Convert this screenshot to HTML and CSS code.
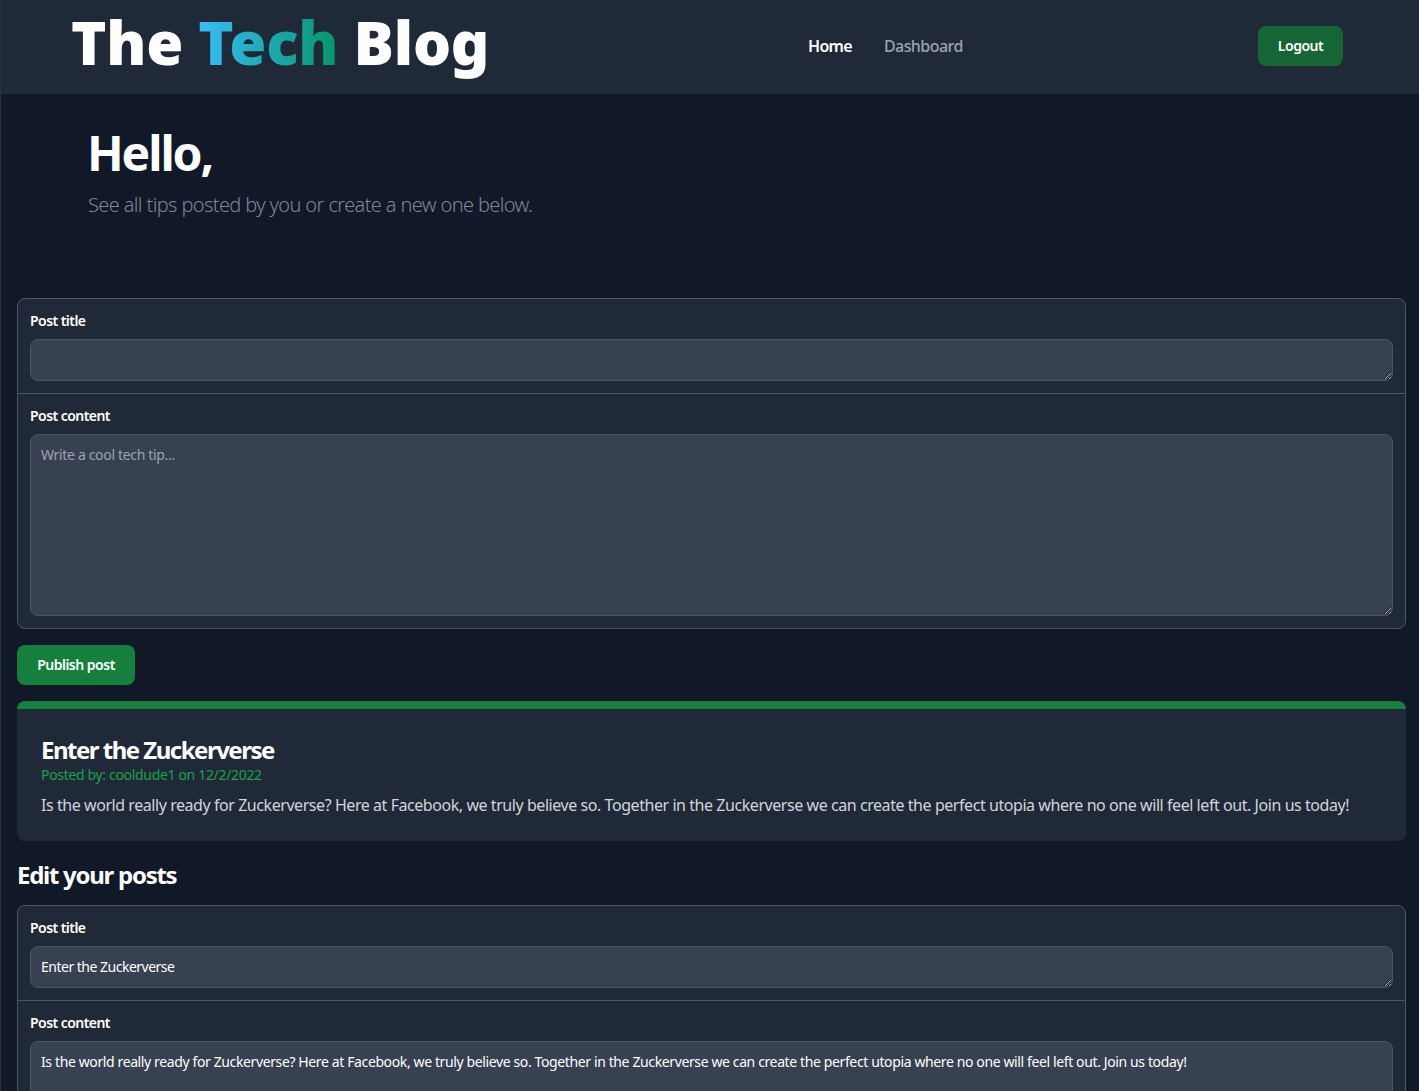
FILE: index.html
```html
<!DOCTYPE html>
<html lang="en">
<head>
<meta charset="utf-8">
<title>The Tech Blog</title>
<link rel="stylesheet" href="styles.css">
</head>
<body>
<nav class="nav">
  <a class="logo">The <span class="logo-grad">Tech</span> Blog</a>
  <div class="nav-links"><a class="nav-link active">Home</a><a class="nav-link nav-link-muted">Dashboard</a></div>
  <button class="btn btn-logout">Logout</button>
</nav>
<header class="hero">
  <h1 class="hero-title">Hello,</h1>
  <p class="hero-sub">See all tips posted by you or create a new one below.</p>
</header>
<main class="main">
  <form class="form-card">
    <div class="field">
      <label class="label">Post title</label>
      <textarea class="input" rows="1"></textarea>
    </div>
    <div class="field field-divided">
      <label class="label">Post content</label>
      <textarea class="input input-tall" placeholder="Write a cool tech tip..."></textarea>
    </div>
  </form>
  <button class="btn btn-publish">Publish post</button>
  <article class="post">
    <h2 class="post-title">Enter the Zuckerverse</h2>
    <p class="post-meta">Posted by: cooldude1 on 12/2/2022</p>
    <p class="post-body">Is the world really ready for Zuckerverse? Here at Facebook, we truly believe so. Together in the Zuckerverse we can create the perfect utopia where no one will feel left out. Join us today!</p>
  </article>
  <h2 class="section-title">Edit your posts</h2>
  <form class="form-card">
    <div class="field">
      <label class="label">Post title</label>
      <textarea class="input" rows="1">Enter the Zuckerverse</textarea>
    </div>
    <div class="field field-divided">
      <label class="label">Post content</label>
      <textarea class="input input-tall">Is the world really ready for Zuckerverse? Here at Facebook, we truly believe so. Together in the Zuckerverse we can create the perfect utopia where no one will feel left out. Join us today!</textarea>
    </div>
  </form>
</main>
</body>
</html>
```
FILE: styles.css
```css
* { box-sizing: border-box; }
html { overflow: hidden; height: 100%; }
body {
  margin: 0;
  height: 1091px;
  overflow: hidden;
  background: #111827;
  color: #fff;
  font-family: "Noto Sans", "Open Sans", sans-serif;
  border-left: 1px solid #2a303c;
}
.nav {
  height: 94px;
  background: #1f2937;
  display: flex;
  align-items: center;
  padding: 0 76px 2px 70px;
}
.logo {
  font-size: 60px;
  font-weight: 900;
  line-height: 60px;
  width: 737px;
  letter-spacing: -0.25px;
  margin-top: -9px;
  white-space: nowrap;
}
.logo-grad {
  background: linear-gradient(to right, #38bdf8, #059669);
  -webkit-background-clip: text;
  background-clip: text;
  color: transparent;
}
.nav-links { display: flex; gap: 32px; flex: 1; }
.nav-link { font-size: 16px; font-weight: 600; color: #fff; letter-spacing: -0.7px; }
.nav-link-muted { font-weight: 500; color: #9ca3af; letter-spacing: -0.55px; }
.btn {
  border: 0;
  border-radius: 8px;
  color: #fff;
  font-family: inherit;
  font-size: 14px;
  font-weight: 600;
  height: 40px;
  padding: 0 0 2px;
  letter-spacing: -0.5px;
}
.btn-logout { background: #166534; width: 85px; }
.hero { height: 204px; padding: 30px 0 0 86px; }
.hero-title { margin: 0; font-size: 48px; line-height: 58px; font-weight: 700; letter-spacing: -2.1px; }
.hero-sub { margin: 9px 0 0 1px; font-size: 20px; line-height: 28px; font-weight: 300; color: #7b8798; letter-spacing: -0.62px; }
.main { padding: 0 13px 0 16px; }
.form-card {
  background: #1f2937;
  border: 1px solid #4b5563;
  border-radius: 8px;
  margin-bottom: 16px;
}
.field { padding: 12px; }
.field-divided { border-top: 1px solid #4b5563; }
.label { display: block; font-size: 14px; line-height: 20px; font-weight: 600; margin-bottom: 8px; letter-spacing: -0.55px; }
.input {
  display: block;
  width: 100%;
  height: 42px;
  padding: 10px;
  background: #374151;
  border: 1px solid #4b5563;
  border-radius: 8px;
  color: #fff;
  font-family: inherit;
  font-size: 14px;
  line-height: 20px;
  letter-spacing: -0.5px;
}
.input::placeholder { color: #9ca3af; letter-spacing: -0.33px; }
.input-tall { height: 182px; letter-spacing: -0.38px; }
.btn-publish { background: #15803d; width: 118px; display: block; }
.post {
  margin-top: 16px;
  height: 140px;
  background: #1f2937;
  border-top: 8px solid #15803d;
  border-radius: 8px;
  padding: 25px 24px 0;
}
.post-title { margin: 0; font-size: 24px; line-height: 32px; font-weight: 700; letter-spacing: -1.5px; }
.post-meta { margin: -1px 0 0; font-size: 14px; line-height: 20px; color: #16a34a; letter-spacing: -0.33px; }
.post-body { margin: 8px 0 0; font-size: 16px; line-height: 24px; color: #d1d5db; letter-spacing: -0.44px; white-space: nowrap; }
.section-title { margin: 18px 0 14px; font-size: 24px; line-height: 32px; font-weight: 700; letter-spacing: -1.27px; }
```
